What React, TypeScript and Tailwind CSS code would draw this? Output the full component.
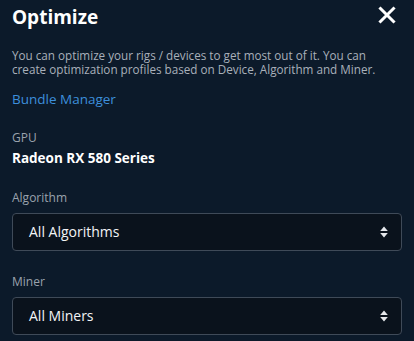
import React from "react";

const Chevrons = () => (
  <svg width="8" height="12" viewBox="0 0 8 12" className="text-gray-200">
    <path d="M4 0.5 L7.8 5 H0.2 Z" fill="currentColor" />
    <path d="M4 11.5 L7.8 7 H0.2 Z" fill="currentColor" />
  </svg>
);

const Select = ({ value }: { value: string }) => (
  <div className="flex items-center justify-between h-[38px] rounded border border-[#3f4a58] bg-[#0a121c] pl-[16px] pr-[13px]">
    <span className="text-[14px] leading-[20px] text-gray-100">{value}</span>
    <Chevrons />
  </div>
);

export default function App() {
  return (
    <div
      className="w-[414px] h-[341px] bg-[#0c1a2a] px-3 overflow-hidden"
      style={{ fontFamily: '"Open Sans", "Noto Sans", sans-serif' }}
    >
      {/* Header */}
      <div className="flex items-start justify-between pt-[3px]">
        <h1 className="text-[19px] leading-[28px] font-bold text-white">Optimize</h1>
        <svg width="18" height="18" viewBox="0 0 18 18" className="mt-[3px] mr-[6px]">
          <path d="M2.5 2.5 L15.5 15.5 M15.5 2.5 L2.5 15.5" stroke="white" strokeWidth="3" strokeLinecap="square" />
        </svg>
      </div>

      <p className="mt-[17px] text-[11.7px] leading-[14px] text-[#a9b0ba]">
        You can optimize your rigs / devices to get most out of it. You can create optimization profiles based on Device, Algorithm and Miner.
      </p>

      <a className="block mt-[14px] text-[13.5px] leading-[18px] text-[#3d8fdc]">Bundle Manager</a>

      <div className="mt-[22px] text-[12px] leading-[16px] text-[#9aa2ad]">GPU</div>
      <div className="mt-[3px] text-[13.5px] leading-[18px] font-bold text-white">Radeon RX 580 Series</div>

      <div className="mt-[23px] text-[12px] leading-[16px] text-[#9aa2ad]">Algorithm</div>
      <div className="mt-[7px]">
        <Select value="All Algorithms" />
      </div>

      <div className="mt-[23px] text-[12px] leading-[16px] text-[#9aa2ad]">Miner</div>
      <div className="mt-[7px]">
        <Select value="All Miners" />
      </div>
    </div>
  );
}
